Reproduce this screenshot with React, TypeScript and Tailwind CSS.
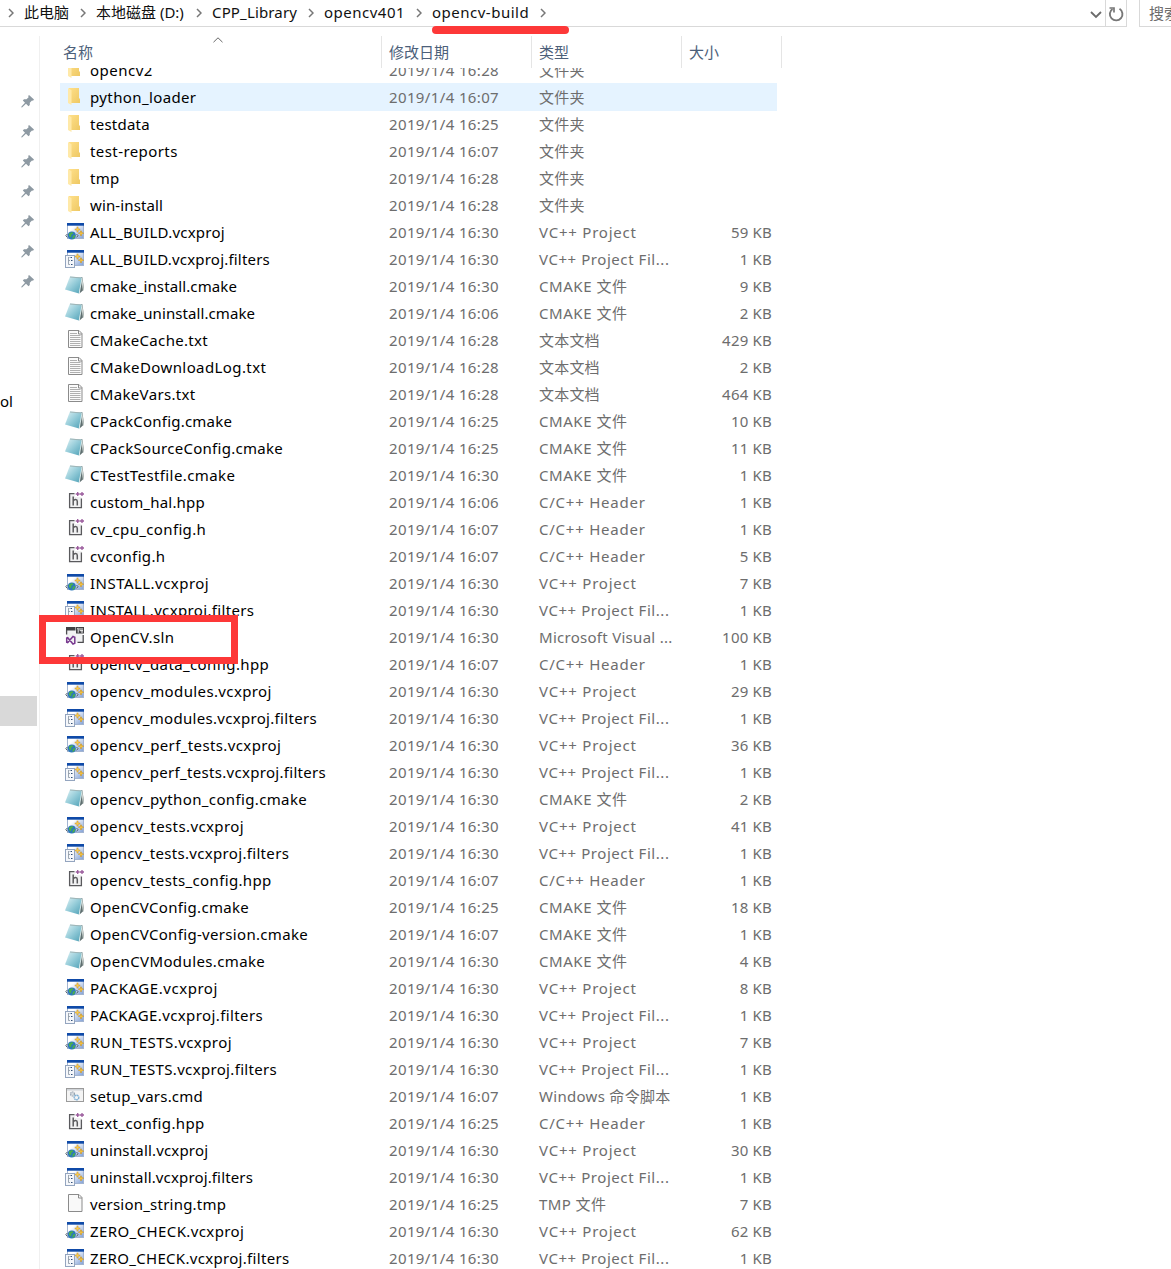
import React from 'react';
import clsx from 'clsx';

type Kind = 'folder' | 'proj' | 'filters' | 'cmake' | 'txt' | 'header' | 'sln' | 'cmd' | 'blank';

type Entry = {
  name: string;
  time: string;
  kind: Kind;
  size?: string;
  tracking: number;
};

const types: Record<Kind, { label: string; tracking: number }> = {
  folder: { label: '文件夹', tracking: 0.2 },
  proj: { label: 'VC++ Project', tracking: 0.78 },
  filters: { label: 'VC++ Project Fil...', tracking: 0.56 },
  cmake: { label: 'CMAKE 文件', tracking: 0.55 },
  txt: { label: '文本文档', tracking: 0.2 },
  header: { label: 'C/C++ Header', tracking: 0.76 },
  sln: { label: 'Microsoft Visual ...', tracking: 0.28 },
  cmd: { label: 'Windows 命令脚本', tracking: 0.3 },
  blank: { label: 'TMP 文件', tracking: 0.4 },
};

const entries: Entry[] = [
  { name: 'opencv2', time: '16:28', kind: 'folder', tracking: 0.5 },
  { name: 'python_loader', time: '16:07', kind: 'folder', tracking: 0.38 },
  { name: 'testdata', time: '16:25', kind: 'folder', tracking: 0.25 },
  { name: 'test-reports', time: '16:07', kind: 'folder', tracking: 0.42 },
  { name: 'tmp', time: '16:28', kind: 'folder', tracking: 0.3 },
  { name: 'win-install', time: '16:28', kind: 'folder', tracking: 0.13 },
  { name: 'ALL_BUILD.vcxproj', time: '16:30', kind: 'proj', size: '59 KB', tracking: 0.24 },
  { name: 'ALL_BUILD.vcxproj.filters', time: '16:30', kind: 'filters', size: '1 KB', tracking: 0.2 },
  { name: 'cmake_install.cmake', time: '16:30', kind: 'cmake', size: '9 KB', tracking: 0.12 },
  { name: 'cmake_uninstall.cmake', time: '16:06', kind: 'cmake', size: '2 KB', tracking: 0.08 },
  { name: 'CMakeCache.txt', time: '16:28', kind: 'txt', size: '429 KB', tracking: 0.32 },
  { name: 'CMakeDownloadLog.txt', time: '16:28', kind: 'txt', size: '2 KB', tracking: 0.4 },
  { name: 'CMakeVars.txt', time: '16:28', kind: 'txt', size: '464 KB', tracking: 0.33 },
  { name: 'CPackConfig.cmake', time: '16:25', kind: 'cmake', size: '10 KB', tracking: 0.22 },
  { name: 'CPackSourceConfig.cmake', time: '16:25', kind: 'cmake', size: '11 KB', tracking: 0.28 },
  { name: 'CTestTestfile.cmake', time: '16:30', kind: 'cmake', size: '1 KB', tracking: 0.4 },
  { name: 'custom_hal.hpp', time: '16:06', kind: 'header', size: '1 KB', tracking: 0.2 },
  { name: 'cv_cpu_config.h', time: '16:07', kind: 'header', size: '1 KB', tracking: 0.35 },
  { name: 'cvconfig.h', time: '16:07', kind: 'header', size: '5 KB', tracking: 0.35 },
  { name: 'INSTALL.vcxproj', time: '16:30', kind: 'proj', size: '7 KB', tracking: 0.47 },
  { name: 'INSTALL.vcxproj.filters', time: '16:30', kind: 'filters', size: '1 KB', tracking: 0.35 },
  { name: 'OpenCV.sln', time: '16:30', kind: 'sln', size: '100 KB', tracking: 0.36 },
  { name: 'opencv_data_config.hpp', time: '16:07', kind: 'header', size: '1 KB', tracking: 0.36 },
  { name: 'opencv_modules.vcxproj', time: '16:30', kind: 'proj', size: '29 KB', tracking: 0.38 },
  { name: 'opencv_modules.vcxproj.filters', time: '16:30', kind: 'filters', size: '1 KB', tracking: 0.31 },
  { name: 'opencv_perf_tests.vcxproj', time: '16:30', kind: 'proj', size: '36 KB', tracking: 0.38 },
  { name: 'opencv_perf_tests.vcxproj.filters', time: '16:30', kind: 'filters', size: '1 KB', tracking: 0.31 },
  { name: 'opencv_python_config.cmake', time: '16:30', kind: 'cmake', size: '2 KB', tracking: 0.36 },
  { name: 'opencv_tests.vcxproj', time: '16:30', kind: 'proj', size: '41 KB', tracking: 0.4 },
  { name: 'opencv_tests.vcxproj.filters', time: '16:30', kind: 'filters', size: '1 KB', tracking: 0.32 },
  { name: 'opencv_tests_config.hpp', time: '16:07', kind: 'header', size: '1 KB', tracking: 0.36 },
  { name: 'OpenCVConfig.cmake', time: '16:25', kind: 'cmake', size: '18 KB', tracking: 0.33 },
  { name: 'OpenCVConfig-version.cmake', time: '16:07', kind: 'cmake', size: '1 KB', tracking: 0.32 },
  { name: 'OpenCVModules.cmake', time: '16:30', kind: 'cmake', size: '4 KB', tracking: 0.38 },
  { name: 'PACKAGE.vcxproj', time: '16:30', kind: 'proj', size: '8 KB', tracking: 0.54 },
  { name: 'PACKAGE.vcxproj.filters', time: '16:30', kind: 'filters', size: '1 KB', tracking: 0.4 },
  { name: 'RUN_TESTS.vcxproj', time: '16:30', kind: 'proj', size: '7 KB', tracking: 0.43 },
  { name: 'RUN_TESTS.vcxproj.filters', time: '16:30', kind: 'filters', size: '1 KB', tracking: 0.33 },
  { name: 'setup_vars.cmd', time: '16:07', kind: 'cmd', size: '1 KB', tracking: 0.2 },
  { name: 'text_config.hpp', time: '16:25', kind: 'header', size: '1 KB', tracking: 0.37 },
  { name: 'uninstall.vcxproj', time: '16:30', kind: 'proj', size: '30 KB', tracking: 0.17 },
  { name: 'uninstall.vcxproj.filters', time: '16:30', kind: 'filters', size: '1 KB', tracking: 0.14 },
  { name: 'version_string.tmp', time: '16:25', kind: 'blank', size: '7 KB', tracking: 0.22 },
  { name: 'ZERO_CHECK.vcxproj', time: '16:30', kind: 'proj', size: '62 KB', tracking: 0.4 },
  { name: 'ZERO_CHECK.vcxproj.filters', time: '16:30', kind: 'filters', size: '1 KB', tracking: 0.31 },
];

// window frame with the two yellow crosses, shared by both project icons
function ProjectWindow() {
  return (
    <>
      <rect x="2.500" y="1.500" width="16" height="15" fill="url(#win)" stroke="#a3b4d0" />
      <rect x="2" y="1" width="17" height="2.700" fill="#0f4aa8" />
      <path d="M12.500 4.800v5.400M9.800 7.500h5.400M16 8.800v5M13.500 11.300h5" stroke="#c08a1e" strokeWidth="1.600" />
      <path d="M12.500 5.300v4.400M10.300 7.500h4.400M16 9.300v4M14 11.300h4" stroke="#ffcf4d" strokeWidth=".8" />
    </>
  );
}

function FileIcon({ kind }: { kind: Kind }) {
  return (
    <svg width="20" height="20" viewBox="0 0 20 20" fill="none" className="mt-[3px] shrink-0">
      {kind === 'folder' && (
        <>
          <path d="M4 1h10v10.500h1V16H4z" fill="url(#folderBack)" />
          <path d="M3 1l3.500 2.200V18L3 16z" fill="#ffe9a8" />
        </>
      )}
      {kind === 'proj' && (
        <>
          <ProjectWindow />
          <circle cx="6.800" cy="13.500" r="4" fill="#2c78bd" />
          <path d="M4 11.500l3-1.500 1.500 1.500-2 1-.5 3-2-1.500zM8 13.500l2.300-.5-1 3-2 1z" fill="#4bb04a" />
          <path d="M2.300 12l-1.500 1.700 1.500 1.700M11.500 12l1.500 1.700-1.500 1.700" stroke="#44525f" strokeWidth=".9" />
        </>
      )}
      {kind === 'filters' && (
        <>
          <ProjectWindow />
          <rect x=".5" y="6.500" width="9" height="12" fill="#f5f7fb" stroke="#94a5bf" />
          <path d="M3 8.500h1.500M3.500 9v6.500M3.500 11.500h1.500M3.500 15.500h1.500" stroke="#8792a0" strokeWidth=".8" />
          <path d="M5.500 8.500H7M6 11.500h1.500M6 15.500h1.500" stroke="#2f4e78" />
        </>
      )}
      {kind === 'cmake' && (
        <>
          <path d="M16 1l1.500.5L19 13.500l-4.500 4z" fill="#5f6f70" />
          <path d="M17.300 2L19 13.500l-1 1.500-1.500-9z" fill="#c9d0cd" />
          <path d="M5 .5L17 1.500 14 17.500 0 13.500z" fill="url(#note)" />
          <path d="M5 1L17 2" stroke="#9fb4b6" />
          <path d="M17 2L14.300 17" stroke="#dfeeee" strokeWidth=".9" />
        </>
      )}
      {kind === 'txt' && (
        <>
          <path d="M3.500.5H14l3 3v14H3.500z" fill="#fbfbfb" stroke="#8b8b8b" />
          <path d="M13.500.5V4H17" stroke="#8b8b8b" />
          <path d="M5 3.500h7M5 5.500h10.500M5 7.500h10.500M5 9.500h10.500M5 11.500h10.500M5 13.500h10.500M5 15.500h10.500" stroke="#b0b0b0" />
        </>
      )}
      {kind === 'blank' && (
        <>
          <path d="M3.500.5H14l3 3v14H3.500z" fill="#f9f9f9" stroke="#8b8b8b" />
          <path d="M13.500.5V4H17" stroke="#8b8b8b" />
        </>
      )}
      {kind === 'header' && (
        <>
          <path d="M4 1.500h6V5h6.500v11H4z" fill="#f1f1f2" />
          <path d="M9.500 1.700H4.600v14h11.800V6.500" stroke="#5a5a5d" strokeWidth="1.300" />
          <path d="M8.200 4.500v9M8.300 8.800q1-1.300 2.300-1.200 1.700.1 1.700 2v3.900" stroke="#5a5a5d" strokeWidth="1.500" />
          <path d="M12.700 0v4M10.700 2h4M17 0v4M15 2h4" stroke="#9a5a9c" strokeWidth="1.300" />
        </>
      )}
      {kind === 'sln' && (
        <>
          <path d="M1.500 3h16v12h-16z" fill="#f1f1f2" />
          <rect x="1" y="0" width="9.500" height="3.500" fill="#424245" />
          <path d="M1.600 3v4.500M18.200 8v7.300H12.500" stroke="#4c4c4f" strokeWidth="1.300" />
          <rect x="11" y="0" width="8" height="6.500" fill="#424245" />
          <path d="M12.200 2l1-.8v4.500M15 1v2.700h3M17 1v5" stroke="#fff" strokeWidth=".9" />
          <path d="M1.700 11v4.300l1 .3 5.300-6.100 1.800.8v5.900l-1.800.8-5.300-6.300z" stroke="#78398f" strokeWidth="1.500" />
        </>
      )}
      {kind === 'cmd' && (
        <>
          <rect x="1.500" y="2.500" width="17" height="13" fill="#f4f4f4" stroke="#9a9a9a" />
          <path d="M2 3.800h16" stroke="#d0d4d8" strokeWidth="1.600" />
          <circle cx="7.500" cy="8" r="2" stroke="#96a3b0" strokeWidth="1.200" strokeDasharray="1.500 .5" />
          <circle cx="7.500" cy="8" r="1" stroke="#b5c0ca" strokeWidth=".8" />
          <circle cx="11.500" cy="11.500" r="2.300" stroke="#7fb0d6" strokeWidth="1.400" strokeDasharray="1.600 .4" />
        </>
      )}
    </svg>
  );
}

function IconDefs() {
  return (
    <svg width="0" height="0" className="absolute">
      <defs>
        <linearGradient id="folderBack" x1="0" y1="0" x2="1" y2="1">
          <stop offset="0" stopColor="#ffe08a" />
          <stop offset="1" stopColor="#eec863" />
        </linearGradient>
        <linearGradient id="win" x1="0" y1="0" x2="1" y2="1">
          <stop offset=".3" stopColor="#ffffff" />
          <stop offset="1" stopColor="#7f9fd6" />
        </linearGradient>
        <linearGradient id="note" x1="0" y1="0" x2="1" y2="1">
          <stop offset="0" stopColor="#e0f3f6" />
          <stop offset=".5" stopColor="#93cbd8" />
          <stop offset="1" stopColor="#4c9fb5" />
        </linearGradient>
      </defs>
    </svg>
  );
}

function Chevron() {
  return (
    <svg width="6" height="10" viewBox="0 0 6 10" fill="none" className="shrink-0">
      <path d="M1 1l4 4-4 4" stroke="#777" strokeWidth="1.500" />
    </svg>
  );
}

function Pin() {
  return (
    <svg width="13" height="13" viewBox="0 0 13 13" className="shrink-0">
      <path
        d="M8 0L13 4.500L12 5.800L11 5.500L8.800 7.800L8.800 10L7.500 11.300L5 8.800L1 12.500L.2 12.300L.5 11.500L4 7.800L1.800 5.500L3 4.200L5.500 4.200L7.600 2.300L7.200 1Z"
        fill="#8e9aa3"
      />
    </svg>
  );
}

function AddressBar() {
  return (
    <div className="flex h-[27px] shrink-0 text-[15px] text-[#111]">
      <div className="flex flex-1 border-b border-[#d9d9d9] pl-2">
        <div className="flex h-[25px] items-center whitespace-nowrap">
          <Chevron />
          <span className="ml-[10px] w-[56px]">此电脑</span>
          <Chevron />
          <span className="ml-[10px] w-[100px]">本地磁盘 (D:)</span>
          <Chevron />
          <span className="ml-[10px] w-[96px] tracking-[0.15px]">CPP_Library</span>
          <Chevron />
          <span className="ml-[10px] w-[92px] tracking-[0.5px]">opencv401</span>
          <Chevron />
          <span className="relative ml-[10px] w-[108px] tracking-[0.5px]">
            opencv-build
            <span className="absolute top-[25px] left-0 h-2 w-[137px] rounded-full bg-[#fd3838]" />
          </span>
          <Chevron />
        </div>
      </div>
      <div className="flex w-[15px] justify-start border-b border-[#d9d9d9] pt-[11px]">
        <svg width="12" height="8" viewBox="0 0 12 8" fill="none">
          <path d="M1 1l5 5 5-5" stroke="#6b6b6b" strokeWidth="1.800" />
        </svg>
      </div>
      <div className="flex w-[22px] justify-center border-x border-b border-[#d9d9d9] pt-[6px]">
        <svg width="16" height="16" viewBox="0 0 16 16" fill="none">
          <path d="M11.500 2.700A6.300 6.300 0 1 1 4.500 2.900" stroke="#777" strokeWidth="1.900" />
          <path d="M1.500 2H6v4.500" stroke="#777" strokeWidth="1.700" />
        </svg>
      </div>
      <div className="ml-3 w-8 overflow-hidden border-b border-l border-[#d9d9d9] pt-[2px] pl-[9px] whitespace-nowrap text-[#6d6d6d]">
        搜索
      </div>
    </div>
  );
}

function Sidebar() {
  return (
    <div className="mt-[9px] flex w-10 shrink-0 flex-col border-r border-[#f0f0f0]">
      <div className="flex flex-col gap-[17px] pt-[59px] pl-[21px]">
        {[0, 1, 2, 3, 4, 5, 6].map((i) => (
          <Pin key={i} />
        ))}
      </div>
      <div className="mt-[101px] h-6 text-[15px] leading-6 text-black">ol</div>
      <div className="mt-[283px] h-[30px] w-[37px] bg-[#d9d9d9]" />
    </div>
  );
}

function ColumnHeader() {
  return (
    <div className="relative flex h-8 shrink-0 text-[15px] leading-8 text-[#4c607a]">
      <div className="w-[342px] border-r border-[#e5e5e5] pl-[23px]">名称</div>
      <div className="w-[150px] border-r border-[#e5e5e5] pl-[7px]">修改日期</div>
      <div className="w-[150px] border-r border-[#e5e5e5] pl-[7px]">类型</div>
      <div className="w-[100px] border-r border-[#e5e5e5] pl-[7px]">大小</div>
      <svg width="10" height="6" viewBox="0 0 10 6" fill="none" className="absolute top-[1px] left-[173px]">
        <path d="M.5 5.200L5 .8l4.500 4.400" stroke="#666" />
      </svg>
    </div>
  );
}

function FileRow({ entry, hovered }: { entry: Entry; hovered: boolean }) {
  const type = types[entry.kind];

  return (
    <div
      className={clsx(
        'flex h-[27px] w-[717px] shrink-0 items-start pl-[5px] text-[15px] leading-[26px] whitespace-nowrap text-[#6d6d6d]',
        hovered && 'bg-[#e5f3ff] shadow-[0_-1px_0_#e5f3ff]'
      )}
    >
      <FileIcon kind={entry.kind} />
      <span className="ml-[5px] w-[299px] text-black" style={{ letterSpacing: entry.tracking }}>
        {entry.name}
      </span>
      <span className="w-[150px] tracking-[0.37px]">2019/1/4 {entry.time}</span>
      <span className="w-[143px]" style={{ letterSpacing: type.tracking }}>
        {type.label}
      </span>
      <span className="w-[90px] text-right tracking-[0.2px]">{entry.size}</span>
    </div>
  );
}

export default function App() {
  return (
    <div className="relative flex h-[1269px] w-[1171px] flex-col overflow-hidden bg-white font-['Noto_Sans','Noto_Sans_CJK_SC',sans-serif]">
      <IconDefs />
      <AddressBar />
      <div className="flex min-h-0 flex-1">
        <Sidebar />
        <div className="mt-[9px] flex min-h-0 flex-1 flex-col">
          <ColumnHeader />
          <div className="min-h-0 flex-1 overflow-hidden pl-5">
            <div className="-mt-[11px] flex flex-col">
              {entries.map((entry) => (
                <FileRow key={entry.name} entry={entry} hovered={entry.name === 'python_loader'} />
              ))}
            </div>
          </div>
        </div>
      </div>
      {/* red marker around the solution file */}
      <div className="absolute top-[615px] left-[39px] h-[49px] w-[199px] border-[7px] border-[#fd3838]" />
    </div>
  );
}
